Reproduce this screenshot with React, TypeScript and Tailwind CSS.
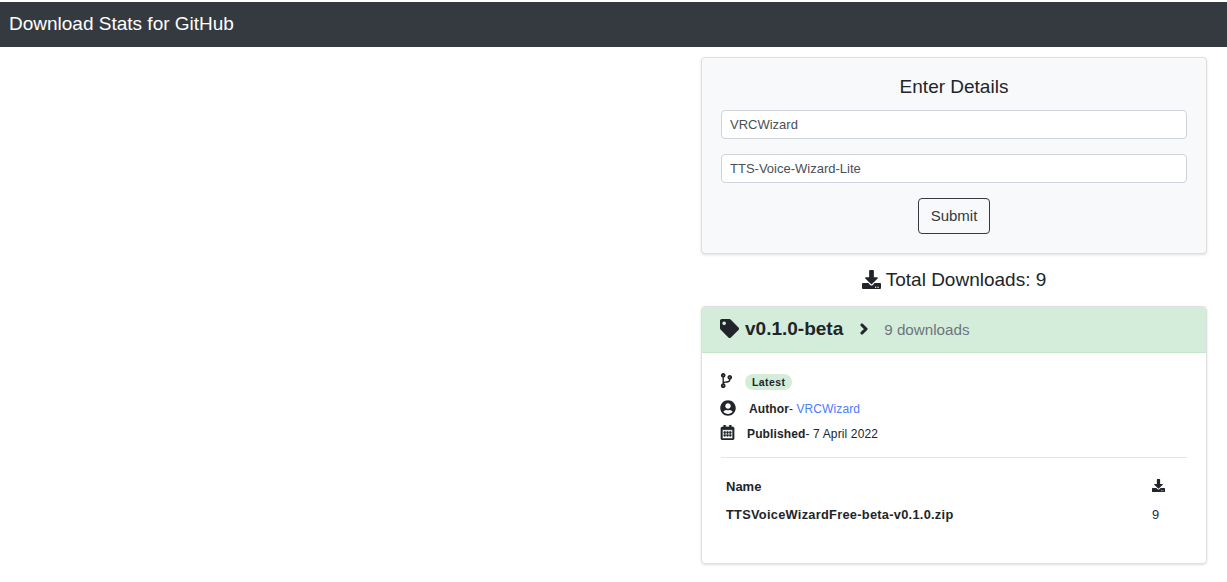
import { FaChevronRight, FaCodeBranch, FaDownload, FaRegCalendarAlt, FaTag, FaUserCircle } from "react-icons/fa";

const App = () => {
  return (
    <div className="min-h-[582px] bg-white pt-[2px] font-['Liberation_Sans',Arial,sans-serif] text-[#212529]">
      {/* Navbar */}
      <nav className="flex h-[45px] items-center bg-[#343a40] px-[9px] text-[19px] text-white">
        Download Stats for GitHub
      </nav>

      <div className="flex justify-end pr-[20px] pt-[10px]">
        <div className="w-[506px]">
          {/* Form */}
          <form className="h-[197px] rounded border border-[#dfdfdf] bg-[#f8f9fa] px-[19px] pt-[17px] shadow-sm">
            <h2 className="text-center text-[19px] leading-[24px]">Enter Details</h2>
            <input
              readOnly
              value="VRCWizard"
              className="mt-[11px] block h-[29px] w-full rounded border border-[#ced4da] bg-white px-[8px] text-[13px] text-[#495057]"
            />
            <input
              readOnly
              value="TTS-Voice-Wizard-Lite"
              className="mt-[15px] block h-[29px] w-full rounded border border-[#ced4da] bg-white px-[8px] text-[13px] text-[#495057]"
            />
            <div className="mt-[15px] flex justify-center">
              <button
                type="button"
                className="h-[36px] w-[72px] rounded border border-[#343a40] text-[15px] text-[#343a40]"
              >
                Submit
              </button>
            </div>
          </form>

          {/* Total */}
          <div className="mt-[14px] flex h-[24px] items-center justify-center gap-[5px] text-[19px]">
            <FaDownload className="size-[19px] -mt-[1px]" />
            <span>Total Downloads: 9</span>
          </div>

          {/* Release card */}
          <div className="mt-[14px] h-[258px] overflow-hidden rounded border border-[#dfdfdf] shadow-sm">
            <div className="flex h-[46px] items-center border-b border-[#c3e6cb] bg-[#d4edda] pl-[18px]">
              <FaTag className="size-[19px] -mt-[2px]" />
              <span className="ml-[6px] text-[19px] font-bold">v0.1.0-beta</span>
              <FaChevronRight className="ml-[15px] size-[12px] -mt-[2px] stroke-[50px]" />
              <span className="ml-[14px] mt-[2px] text-[15.2px] text-[#6c757d]">9 downloads</span>
            </div>

            <div className="px-[19px]">
              <div className="mt-[20px] flex h-[18px] items-center">
                <FaCodeBranch className="size-[15px] -mt-[4px] -ml-[2px]" />
                <span className="ml-[11px] rounded-full bg-[#d4edda] px-[7px] text-[10.5px] leading-[16px] font-bold tracking-[0.4px]">
                  Latest
                </span>
              </div>
              <div className="mt-[9px] flex h-[18px] items-center text-[12px] tracking-[0.1px]">
                <FaUserCircle className="size-[16px] -mt-[3px] -ml-[1px]" />
                <span className="ml-[13px] font-bold">Author</span>
                <span>-&nbsp;</span>
                <span className="text-[#4d7cfe]">VRCWizard</span>
              </div>
              <div className="mt-[7px] flex h-[18px] items-center text-[12px] tracking-[0.13px]">
                <FaRegCalendarAlt className="size-[15px] -mt-[3px] -ml-[1px] stroke-[20px]" />
                <span className="ml-[12px] font-bold">Published</span>
                <span>- 7 April 2022</span>
              </div>

              <div className="mt-[14px] border-t border-[#e5e5e5]" />

              <div className="mt-[19px] flex items-center justify-between pl-[5px] pr-[22px] text-[13px] font-bold">
                <span>Name</span>
                <FaDownload className="size-[13px] -mt-[2px]" />
              </div>
              <div className="mt-[8px] flex items-center pl-[5px] text-[12.8px]">
                <span className="font-bold tracking-[0.28px]">TTSVoiceWizardFree-beta-v0.1.0.zip</span>
                <span className="ml-auto mr-[28px] text-[#1b2a4a]">9</span>
              </div>
            </div>
          </div>
        </div>
      </div>
    </div>
  );
};

export default App;
